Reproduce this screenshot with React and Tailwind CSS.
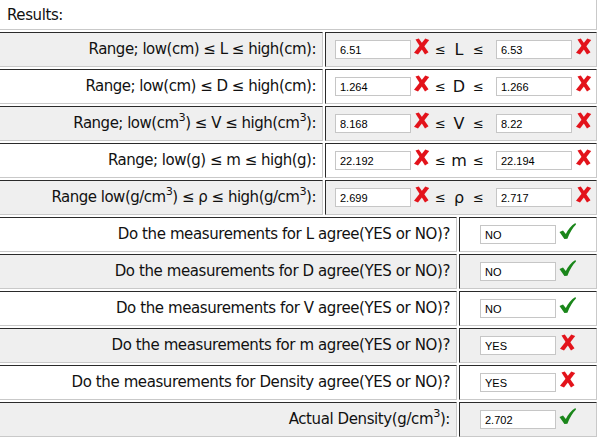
import React from "react";

const Cross = () => (
  <svg width="17" height="17" viewBox="0 0 17 17" className="shrink-0 mb-[7px]">
    <path d="M2.5 1.5 L5.8 0.6 L15.5 14.2 L12 16.6 Z" fill="#e3131b" />
    <path d="M12.3 0.6 L16.2 2 L5 16.4 L1 14.8 Z" fill="#e3131b" />
  </svg>
);

const Check = () => (
  <svg width="17" height="16" viewBox="0 0 17 16" className="shrink-0 mb-[8px]">
    <path d="M0.5 9 L4 7.4 L6.8 11 C9 6.4 12.4 2.4 16.4 0 L17 1.4 C13.6 4.8 10.6 9.6 8.4 15.8 L5.4 16 Z" fill="#1a861a" />
  </svg>
);

const Box = ({ value }) => (
  <input
    readOnly
    value={value}
    className="w-[76px] h-[19px] shrink-0 border border-[#c6c6c6] bg-white pl-[4px] text-[11px] text-black font-['Liberation_Sans',Arial,sans-serif] outline-none"
  />
);

const cellBase = "h-[35px] border-t border-b border-t-[#2a2a2a] border-b-[#c9c9c9]";

const rangeRows = [
  { label: <>Range; low(cm) ≤ L ≤ high(cm):</>, v1: "6.51", sym: "L", v2: "6.53" },
  { label: <>Range; low(cm) ≤ D ≤ high(cm):</>, v1: "1.264", sym: "D", v2: "1.266" },
  { label: <>Range; low(cm<sup>3</sup>) ≤ V ≤ high(cm<sup>3</sup>):</>, v1: "8.168", sym: "V", v2: "8.22" },
  { label: <>Range; low(g) ≤ m ≤ high(g):</>, v1: "22.192", sym: "m", v2: "22.194" },
  { label: <>Range low(g/cm<sup>3</sup>) ≤ ρ ≤ high(g/cm<sup>3</sup>):</>, v1: "2.699", sym: "ρ", v2: "2.717" },
];

const agreeRows = [
  { label: <>Do the measurements for L agree(YES or NO)?</>, v: "NO", ok: true },
  { label: <>Do the measurements for D agree(YES or NO)?</>, v: "NO", ok: true },
  { label: <>Do the measurements for V agree(YES or NO)?</>, v: "NO", ok: true },
  { label: <>Do the measurements for m agree(YES or NO)?</>, v: "YES", ok: false },
  { label: <>Do the measurements for Density agree(YES or NO)?</>, v: "YES", ok: false },
  { label: <>Actual Density(g/cm<sup>3</sup>):</>, v: "2.702", ok: true },
];

export default function App() {
  return (
    <div className="w-[599px] h-[441px] overflow-hidden bg-white text-[15px] text-[#111] font-['DejaVu_Sans',sans-serif]">
      <div className="w-[597px] flex flex-col gap-[2px]">
        <div className="h-[30px] border-b border-r border-[#c9c9c9] flex items-center pl-[7px] pt-[1px] tracking-[-0.4px]">
          Results:
        </div>
        {rangeRows.map((r, i) => {
          const bg = i % 2 === 0 ? "bg-[#efefef]" : "bg-white";
          return (
            <div key={i} className="flex gap-[2px]">
              <div className={`${cellBase} ${bg} w-[323px] shrink-0 border-r border-r-[#c9c9c9] flex items-center justify-end pr-[6px] whitespace-nowrap tracking-[-0.5px]`}>
                {r.label}
              </div>
              <div className={`${cellBase} ${bg} flex-1 border-l border-r border-l-[#2a2a2a] border-r-[#c9c9c9] flex items-center pl-[9px]`}>
                <Box value={r.v1} />
                <span className="ml-[2px]"><Cross /></span>
                <span className="flex items-center w-[66px] shrink-0">
                  <span className="ml-[5px] w-[10px] text-[13px]">≤</span>
                  <span className="w-[28px] text-center text-[16px]">{r.sym}</span>
                  <span className="text-[13px]">≤</span>
                </span>
                <Box value={r.v2} />
                <span className="ml-[3px]"><Cross /></span>
              </div>
            </div>
          );
        })}
        {agreeRows.map((r, i) => {
          const bg = i % 2 === 1 ? "bg-[#efefef]" : "bg-white";
          return (
            <div key={i} className="flex gap-[2px]">
              <div className={`${cellBase} ${bg} w-[457px] shrink-0 border-r border-r-[#c9c9c9] flex items-center justify-end pr-[6px] whitespace-nowrap tracking-[-0.4px]`}>
                {r.label}
              </div>
              <div className={`${cellBase} ${bg} flex-1 border-l border-r border-l-[#2a2a2a] border-r-[#c9c9c9] flex items-center justify-center gap-[3px]`}>
                <Box value={r.v} />
                {r.ok ? <Check /> : <Cross />}
              </div>
            </div>
          );
        })}
      </div>
    </div>
  );
}
